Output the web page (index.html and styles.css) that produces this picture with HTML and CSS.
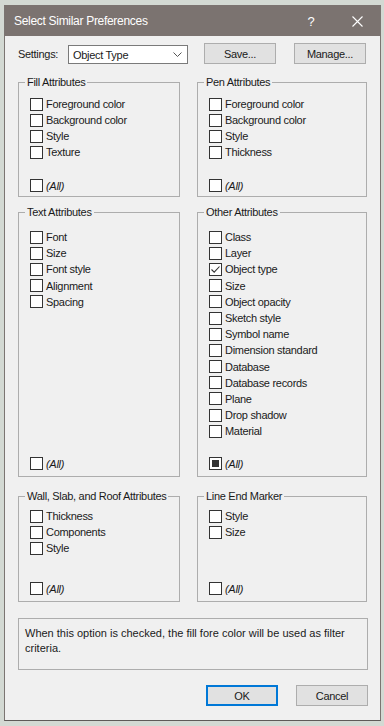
FILE: index.html
```html
<!DOCTYPE html>
<html lang="en">

<head>
    <meta charset="UTF-8">
    <meta name="viewport" content="width=device-width, initial-scale=1">
    <title>Select Similar Preferences</title>
    <link rel="stylesheet" href="styles.css">
</head>

<body>
    <div class="window">
        <div class="titlebar">
            <span class="title">Select Similar Preferences</span>
            <span class="help">?</span>
            <span class="close">
                <svg width="11" height="11" viewBox="0 0 11 11"><path d="M0.5 0.5 L10.5 10.5 M10.5 0.5 L0.5 10.5" stroke="#fff" stroke-width="1.1" fill="none"/></svg>
            </span>
        </div>

        <div class="content">
            <div class="settings-row">
                <span class="settings-label">Settings:</span>
                <div class="select">
                    <span>Object Type</span>
                    <svg width="9" height="5" viewBox="0 0 9 5"><path d="M0.5 0.5 L4.5 4.5 L8.5 0.5" stroke="#555" stroke-width="1" fill="none"/></svg>
                </div>
                <button class="btn btn-save">Save...</button>
                <button class="btn btn-manage">Manage...</button>
            </div>

            <div class="groups">
                <div class="group group-short">
                    <div class="group-title">Fill Attributes</div>
                    <ul class="items">
                        <li><span class="box"></span>Foreground color</li>
                        <li><span class="box"></span>Background color</li>
                        <li><span class="box"></span>Style</li>
                        <li><span class="box"></span>Texture</li>
                    </ul>
                    <div class="all"><span class="box"></span><em>(All)</em></div>
                </div>

                <div class="group group-short">
                    <div class="group-title">Pen Attributes</div>
                    <ul class="items">
                        <li><span class="box"></span>Foreground color</li>
                        <li><span class="box"></span>Background color</li>
                        <li><span class="box"></span>Style</li>
                        <li><span class="box"></span>Thickness</li>
                    </ul>
                    <div class="all"><span class="box"></span><em>(All)</em></div>
                </div>

                <div class="group group-tall">
                    <div class="group-title">Text Attributes</div>
                    <ul class="items">
                        <li><span class="box"></span>Font</li>
                        <li><span class="box"></span>Size</li>
                        <li><span class="box"></span>Font style</li>
                        <li><span class="box"></span>Alignment</li>
                        <li><span class="box"></span>Spacing</li>
                    </ul>
                    <div class="all"><span class="box"></span><em>(All)</em></div>
                </div>

                <div class="group group-tall">
                    <div class="group-title">Other Attributes</div>
                    <ul class="items">
                        <li><span class="box"></span>Class</li>
                        <li><span class="box"></span>Layer</li>
                        <li><span class="box checked"><svg width="11" height="11" viewBox="0 0 11 11"><path d="M1.5 5.5 L4.2 8.2 L9.5 2.5" stroke="#333" stroke-width="1.1" fill="none"/></svg></span>Object type</li>
                        <li><span class="box"></span>Size</li>
                        <li><span class="box"></span>Object opacity</li>
                        <li><span class="box"></span>Sketch style</li>
                        <li><span class="box"></span>Symbol name</li>
                        <li><span class="box"></span>Dimension standard</li>
                        <li><span class="box"></span>Database</li>
                        <li><span class="box"></span>Database records</li>
                        <li><span class="box"></span>Plane</li>
                        <li><span class="box"></span>Drop shadow</li>
                        <li><span class="box"></span>Material</li>
                    </ul>
                    <div class="all"><span class="box mixed"></span><em>(All)</em></div>
                </div>

                <div class="group group-low">
                    <div class="group-title">Wall, Slab, and Roof Attributes</div>
                    <ul class="items">
                        <li><span class="box"></span>Thickness</li>
                        <li><span class="box"></span>Components</li>
                        <li><span class="box"></span>Style</li>
                    </ul>
                    <div class="all"><span class="box"></span><em>(All)</em></div>
                </div>

                <div class="group group-low">
                    <div class="group-title">Line End Marker</div>
                    <ul class="items">
                        <li><span class="box"></span>Style</li>
                        <li><span class="box"></span>Size</li>
                    </ul>
                    <div class="all"><span class="box"></span><em>(All)</em></div>
                </div>
            </div>

            <div class="hint">
                When this option is checked, the fill fore color will be used as filter criteria.
            </div>

            <div class="actions">
                <button class="btn btn-ok">OK</button>
                <button class="btn">Cancel</button>
            </div>
        </div>
    </div>
</body>

</html>
```

FILE: styles.css
```css
body {
    margin: 0;
    background-color: #d3d9d3;
    font-family: "Liberation Sans", Arial, sans-serif;
    font-size: 11px;
    letter-spacing: -0.3px;
    color: #1a1a1a;
}

.window {
    width: 375px;
    height: 714px;
    margin: 5px 0 0 4px;
    border: 1px solid #7b7572;
    border-top-color: #7b7370;
    border-bottom-color: #5e5a58;
    background-color: #f0f0f0;
    display: flex;
    flex-direction: column;
}

.titlebar {
    height: 30px;
    background-color: #7b7370;
    color: #fff;
    display: flex;
    align-items: center;
    font-size: 12px;
}

.title {
    margin-left: 9px;
    flex: 1;
}

.help {
    width: 20px;
    text-align: center;
    font-size: 13px;
    margin-right: 31px;
}

.close {
    width: 11px;
    height: 11px;
    margin-right: 17px;
    display: flex;
}

.content {
    padding: 0 12px 0 13px;
    display: flex;
    flex-direction: column;
}

/* settings row */

.settings-row {
    display: flex;
    align-items: center;
    height: 21px;
    margin-top: 7px;
}

.settings-label {
    width: 50px;
}

.select {
    border: 1px solid #7a7a7a;
    background: #fff;
    display: flex;
    align-items: center;
    justify-content: space-between;
    padding: 0 5px 0 4px;
    box-sizing: border-box;
    width: 120px;
    height: 19px;
    margin-top: 2px;
}

.btn {
    width: 72px;
    height: 21px;
    border: 1px solid #adadad;
    background-color: #e1e1e1;
    font-family: inherit;
    font-size: 11px;
    letter-spacing: -0.3px;
    color: #1a1a1a;
    padding: 0;
}

.btn-save {
    margin-left: 16px;
}

.btn-manage {
    margin-left: 18px;
}

.btn-ok {
    border: 2px solid #0078d7;
}

/* group boxes */

.groups {
    display: grid;
    grid-template-columns: 162px 170px;
    grid-template-rows: 115px 265px 110px;
    column-gap: 17px;
    row-gap: 15px;
    margin-top: 18px;
}

.group {
    border: 1px solid #adadad;
    display: flex;
    flex-direction: column;
    padding: 0 0 4px 11px;
}

.group-title {
    width: fit-content;
    line-height: 14px;
    margin: -8px 0 0 -5px;
    padding: 0 2px;
    background-color: #f0f0f0;
}

.items {
    list-style: none;
    margin: 7px 0 0 0;
    padding: 0;
}

.items li,
.all {
    height: 16.2px;
    display: flex;
    align-items: center;
}

.group-short {
    padding-bottom: 2px;
}

.group-short .items li {
    height: 16px;
}

.group-tall .items {
    margin-top: 10px;
}

.group-low {
    margin-top: 4px;
}

.group-low .items {
    margin-top: 5px;
}

.all {
    margin-top: auto;
}

.all em {
    font-style: italic;
}

.box {
    width: 13px;
    height: 13px;
    box-sizing: border-box;
    border: 1px solid #333;
    background-color: #fff;
    margin-right: 3px;
    flex-shrink: 0;
    display: flex;
    align-items: center;
    justify-content: center;
}

.box.mixed::after {
    content: "";
    width: 7px;
    height: 7px;
    background-color: #333;
}

/* hint and buttons */

.hint {
    height: 52px;
    box-sizing: border-box;
    border: 1px solid #adadad;
    margin-top: 16px;
    padding: 7px 6px;
    line-height: 15px;
    letter-spacing: 0;
}

.actions {
    display: flex;
    justify-content: flex-end;
    gap: 18px;
    margin-top: 15px;
}
```
